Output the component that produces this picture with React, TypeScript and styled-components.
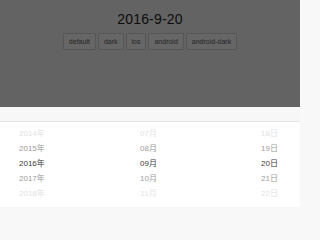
import React from "react";
import styled, { createGlobalStyle } from "styled-components";

const Global = createGlobalStyle`
  html, body { margin: 0; padding: 0; }
  body {
    background: #f8f8f8;
    font-family: "Liberation Sans", "Noto Sans CJK SC", Arial, sans-serif;
  }
`;

const Screen = styled.div`
  position: relative;
  width: 300px;
  height: 207px;
  overflow: hidden;
  background: #f8f8f8;
`;

const Page = styled.div`
  display: flex;
  flex-direction: column;
  align-items: center;
  padding-top: 11px;
  gap: 6px;
`;

const Title = styled.div`
  font-size: 14px;
  line-height: 16px;
  color: #1e1e1e;
  letter-spacing: 0.2px;
`;

const ButtonRow = styled.div`
  display: flex;
  gap: 2px;
`;

const ThemeButton = styled.button`
  height: 17px;
  padding: 0 5px;
  font-family: "Liberation Sans", Arial, sans-serif;
  font-size: 7px;
  color: #5c5c5c;
  background: #ffffff;
  border: 1px solid #d6d6d6;
  border-radius: 1px;
`;

const Mask = styled.div`
  position: absolute;
  inset: 0;
  background: rgba(0, 0, 0, 0.6);
`;

const Popup = styled.div`
  position: absolute;
  left: 0;
  right: 0;
  bottom: 0;
  height: 100px;
  background: #ffffff;
  display: flex;
  flex-direction: column;
`;

const PopupHeader = styled.div`
  height: 14px;
  background: #f7f7f7;
  border-bottom: 1px solid #e6e6e6;
`;

const Columns = styled.div`
  display: grid;
  grid-template-columns: 1fr 1fr 1fr;
  padding: 4px 22px 0 19px;
`;

const Column = styled.div<{ $align: "left" | "center" | "right" }>`
  display: flex;
  flex-direction: column;
  text-align: ${(p) => p.$align};
`;

const Item = styled.div<{ $dist: number }>`
  height: 15px;
  line-height: 15px;
  font-size: 8px;
  color: ${(p) => (p.$dist === 0 ? "#3a3a3a" : p.$dist === 1 ? "#9c9c9c" : "#e2e2e2")};
`;

const years = ["2014年", "2015年", "2016年", "2017年", "2018年"];
const months = ["07月", "08月", "09月", "10月", "11月"];
const days = ["18日", "19日", "20日", "21日", "22日"];

const themes = ["default", "dark", "ios", "android", "android-dark"];

export default function App() {
  const cols: { items: string[]; align: "left" | "center" | "right" }[] = [
    { items: years, align: "left" },
    { items: months, align: "center" },
    { items: days, align: "right" },
  ];
  return (
    <>
      <Global />
      <Screen>
        <Page>
          <Title>2016-9-20</Title>
          <ButtonRow>
            {themes.map((t) => (
              <ThemeButton key={t}>{t}</ThemeButton>
            ))}
          </ButtonRow>
        </Page>
        <Mask />
        <Popup>
          <PopupHeader />
          <Columns>
            {cols.map((c, ci) => (
              <Column key={ci} $align={c.align}>
                {c.items.map((it, i) => (
                  <Item key={it} $dist={Math.abs(i - 2)}>
                    {it}
                  </Item>
                ))}
              </Column>
            ))}
          </Columns>
        </Popup>
      </Screen>
    </>
  );
}
